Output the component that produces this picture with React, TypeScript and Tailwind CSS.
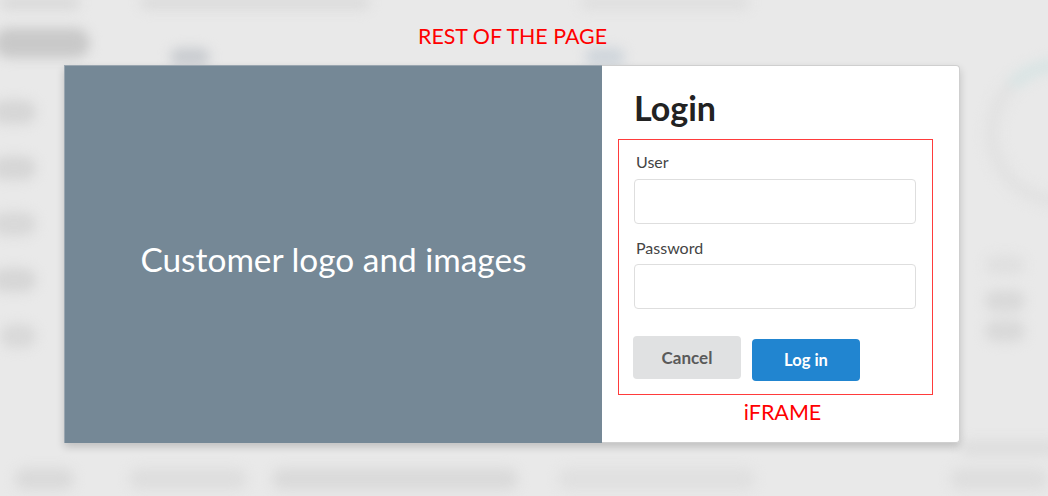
import React from "react";

function BackgroundPage() {
  return (
    <div className="absolute inset-0 flex flex-col blur-[6px]">
      <div className="flex h-[14px] -mt-[4px] items-stretch">
        <div className="w-[80px] rounded-full bg-[#dadada]" />
        <div className="ml-[60px] w-[230px] rounded-full bg-[#dcdcdc]" />
        <div className="ml-[210px] w-[170px] rounded-full bg-[#dfdfdf]" />
      </div>
      <div className="flex mt-[18px] h-[30px] items-start">
        <div className="-ml-[6px] w-[96px] h-[30px] rounded-full bg-[#c9c9c9]" />
        <div className="ml-[80px] mt-[20px] w-[40px] h-[18px] rounded-full bg-[#c9ccd0]" />
        <div className="ml-[375px] mt-[20px] w-[40px] h-[18px] rounded-full bg-[#cfd5db]" />
      </div>
      <div className="flex flex-1">
        <div className="w-[44px] -ml-[8px] flex flex-col gap-[32px] pt-[42px]">
          <div className="h-[24px] rounded-full bg-[#d6d6d6]" />
          <div className="h-[24px] rounded-full bg-[#d6d6d6]" />
          <div className="h-[24px] rounded-full bg-[#d8d8d8]" />
          <div className="h-[24px] rounded-full bg-[#d6d6d6]" />
          <div className="h-[24px] ml-[8px] rounded-full bg-[#d9d9d9]" />
        </div>
        <div className="flex-1" />
        <div className="w-[63px] flex flex-col">
          <div className="w-[150px] h-[150px] shrink-0 rounded-full border-[14px] border-[#e2e2e2] border-t-[#d9e4e4]" />
          <div className="mt-[47px] w-[40px] h-[20px] rounded-full bg-[#e0e0e0]" />
          <div className="mt-[15px] w-[40px] h-[22px] rounded-full bg-[#d9d9d9]" />
          <div className="mt-[8px] w-[40px] h-[22px] rounded-full bg-[#d9d9d9]" />
          <div className="mt-[98px] -ml-[25px] w-[100px] h-[16px] rounded-full bg-[#dedede]" />
        </div>
      </div>
      <div className="flex h-[22px] mb-[6px] items-stretch">
        <div className="ml-[15px] w-[60px] rounded-full bg-[#dadada]" />
        <div className="ml-[55px] w-[120px] rounded-full bg-[#dedede]" />
        <div className="ml-[25px] w-[250px] rounded-full bg-[#dadada]" />
        <div className="ml-[40px] w-[200px] rounded-full bg-[#e0e0e0]" />
        <div className="ml-[195px] w-[100px] rounded-full bg-[#dedede]" />
      </div>
    </div>
  );
}

export default function App() {
  return (
    <div
      className="relative w-full h-[496px] overflow-hidden bg-[#e9e9e9]"
      style={{ fontFamily: "Lato, 'Open Sans', sans-serif" }}
    >
      <BackgroundPage />

      <div className="absolute inset-0 flex flex-col">
        <div className="h-[65px] pt-[24px] pl-[418px]">
          <span className="text-[21.4px] leading-[24px] text-[#ff0000]">REST OF THE PAGE</span>
        </div>

        <div className="ml-[64px] flex w-[896px] h-[378px] shadow-[0_4px_8px_rgba(0,0,0,0.18)] rounded-r-[4px]">
          <div className="w-[538px] h-full bg-[#758896] border-l border-t border-[#9aa6b0] flex items-center justify-center">
            <span className="text-[33.4px] text-white pt-[10px]">Customer logo and images</span>
          </div>
          <div className="flex-1 h-full bg-white border-r border-t border-b border-[#cfcfcf] rounded-r-[4px] pl-[16px] pr-[26px]">
            <h1 className="pl-[16px] pt-[22px] text-[34px] leading-[40px] font-bold text-[#222]">Login</h1>
            <div className="mt-[11px] h-[256px] border border-[#ff3b3b] pl-[15px] pr-[16px] pt-[12px]">
              <div className="pl-[2px] text-[16px] leading-[20px] text-[#444]">User</div>
              <div className="mt-[7px] h-[45px] rounded-[4px] border border-[#dedede] bg-white" />
              <div className="mt-[14px] pl-[2px] text-[16px] leading-[20px] text-[#444]">Password</div>
              <div className="mt-[6px] h-[45px] rounded-[4px] border border-[#dedede] bg-white" />
              <div className="mt-[27px] flex items-start gap-[11px]">
                <button className="-ml-[1px] w-[108px] h-[43px] rounded-[4px] bg-[#e0e1e2] text-[17px] font-bold text-[#5a5a5a]">
                  Cancel
                </button>
                <button className="mt-[3px] w-[108px] h-[42px] rounded-[4px] bg-[#2185d0] text-[16.5px] font-bold text-white">
                  Log in
                </button>
              </div>
            </div>
            <div className="mt-[4px] text-center pl-[14px] text-[21.5px] leading-[26px] text-[#ff0000]">iFRAME</div>
          </div>
        </div>
      </div>
    </div>
  );
}
